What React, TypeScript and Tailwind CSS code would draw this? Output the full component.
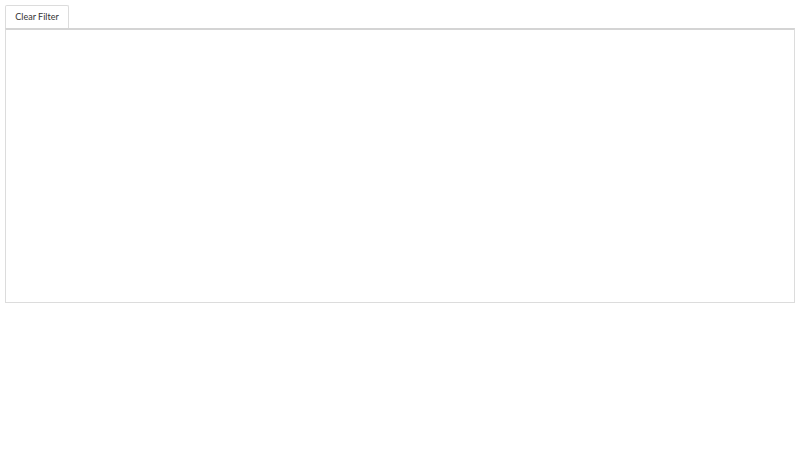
import React from "react";

export default function App() {
    return (
        <div className="w-[800px] h-[450px] bg-white p-[5px] font-['Lato',sans-serif]">
            {/* Toolbar */}
            <div className="flex">
                <button className="h-[23px] w-[64px] border border-b-0 border-[#dcdcdc] rounded-t-[2px] bg-white text-[9px] leading-none text-[#333] flex items-center justify-center pb-[1px]">
                    Clear Filter
                </button>
            </div>
            {/* Grid area */}
            <div className="w-[790px] h-[275px] border border-[#dcdcdc] border-t-2 border-t-[#d4d4d4] bg-white" />
        </div>
    );
}
